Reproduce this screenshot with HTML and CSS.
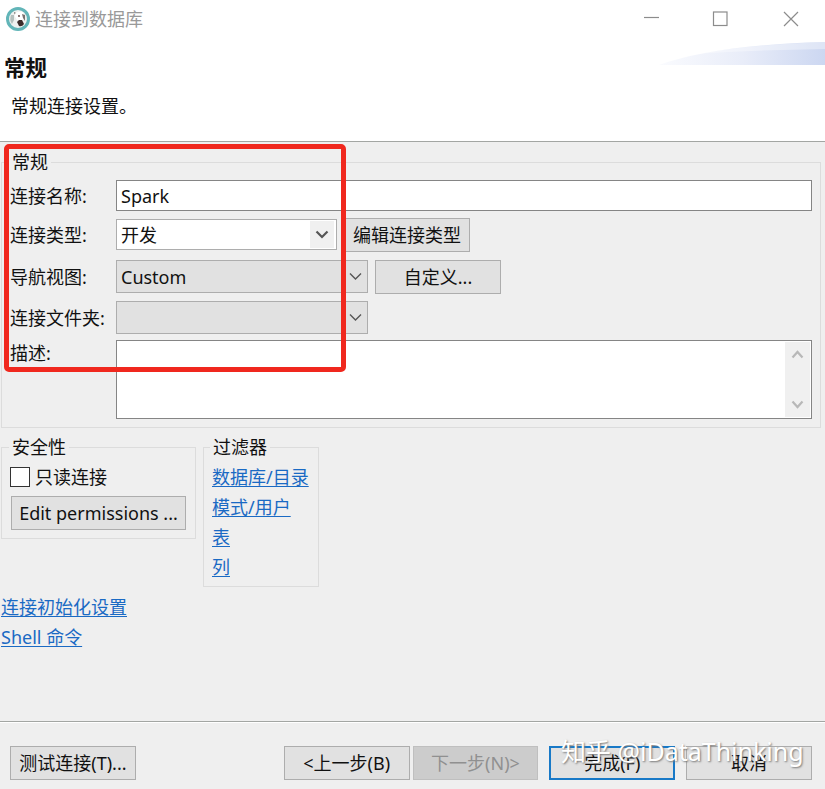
FILE: index.html
```
<!DOCTYPE html>
<html lang="zh-CN">
<head>
  <meta charset="UTF-8">
  <meta name="viewport" content="width=device-width, initial-scale=1.0">
  <link rel="stylesheet" href="styles.css">
  <title>连接到数据库</title>
</head>
<body>
  <header>
    <div class="titlebar">
      <svg class="logo" width="26" height="26" viewBox="0 0 26 26">
        <circle cx="13" cy="13" r="10.5" fill="#eef0ef" stroke="#62b5b8" stroke-width="3"/>
        <path d="M6 9 Q4 14 7 18 L9 14 L9 9 Z" fill="#b5bfbd"/>
        <path d="M9 6 L11 7 L10 10 Z" fill="#665f5c"/>
        <path d="M9 9 Q12 4 18 6 L20 11 L17 14 L12 14 Z" fill="#fff"/>
        <path d="M12 16 L14 14 L17 14 L19 18 Q17 21 14 20 Z" fill="#3b2b2a"/>
        <path d="M17 8 L20 9 L20 15 L18 12 Z" fill="#77716f"/>
        <circle cx="14" cy="10" r=".9" fill="#533"/>
      </svg>
      <span class="title">连接到数据库</span>
      <svg class="controls" width="160" height="20" viewBox="0 0 160 20" fill="none" stroke="#8c8c8c" stroke-width="1.2">
        <path d="M0 8.5H15"/>
        <rect x="69.5" y="3" width="13.5" height="13.5"/>
        <path d="M140 3L154 17M154 3L140 17"/>
      </svg>
    </div>
    <svg class="swoosh" width="170" height="28" viewBox="0 0 170 28">
      <defs>
        <linearGradient id="fade">
          <stop offset="0" stop-color="#fafbfe"/>
          <stop offset=".5" stop-color="#e9edf9"/>
          <stop offset="1" stop-color="#ccd7f1"/>
        </linearGradient>
      </defs>
      <path d="M4 24Q60 4 170 1V24Z" fill="url(#fade)"/>
      <path d="M40 13Q90 4 170 1V8Q100 9 40 13Z" fill="#fff" opacity=".35"/>
    </svg>
    <h1>常规</h1>
    <p>常规连接设置。</p>
  </header>

  <main>
    <fieldset class="general">
      <legend>常规</legend>
      <label>连接名称:</label>
      <div class="field name">Spark</div>

      <label class="low">连接类型:</label>
      <div class="row">
        <div class="field select type">开发
          <span class="drop"><svg width="14" height="9" viewBox="0 0 14 9"><path d="M1.5 1.5L7 7L12.5 1.5"/></svg></span>
        </div>
        <button class="edit-type">编辑连接类型</button>
      </div>

      <label class="low">导航视图:</label>
      <div class="row">
        <div class="field select flat">Custom
          <svg width="13" height="9" viewBox="0 0 13 9"><path d="M1 1.5L6.5 7L12 1.5"/></svg>
        </div>
        <button>自定义...</button>
      </div>

      <label class="low">连接文件夹:</label>
      <div class="row">
        <div class="field select flat"><span></span>
          <svg width="13" height="9" viewBox="0 0 13 9"><path d="M1 1.5L6.5 7L12 1.5"/></svg>
        </div>
      </div>

      <label>描述:</label>
      <div class="field area">
        <div class="scrollbar">
          <svg width="13" height="9" viewBox="0 0 13 9"><path d="M1.5 7.5L6.5 2L11.5 7.5"/></svg>
          <svg width="13" height="9" viewBox="0 0 13 9"><path d="M1.5 1.5L6.5 7L11.5 1.5"/></svg>
        </div>
      </div>
    </fieldset>

    <div class="groups">
      <fieldset class="security">
        <legend>安全性</legend>
        <label class="check"><span class="box"></span>只读连接</label>
        <button class="permissions">Edit permissions ...</button>
      </fieldset>
      <fieldset class="filters">
        <legend>过滤器</legend>
        <a href="#">数据库/目录</a>
        <a href="#">模式/用户</a>
        <a href="#">表</a>
        <a href="#">列</a>
      </fieldset>
    </div>

    <div class="links">
      <a href="#">连接初始化设置</a>
      <a href="#">Shell 命令</a>
    </div>
  </main>

  <footer>
    <button class="test">测试连接(T)...</button>
    <button class="prev">&lt;上一步(B)</button>
    <button class="next" disabled>下一步(N)&gt;</button>
    <button class="finish">完成(F)</button>
    <button>取消</button>
  </footer>

  <div class="highlight"></div>
  <div class="watermark">知乎 @iDataThinking</div>
</body>
</html>
```
FILE: styles.css
```
*, *::before, *::after {
  margin: 0;
  padding: 0;
  box-sizing: border-box;
}

body {
  position: relative;
  display: flex;
  flex-direction: column;
  width: 825px;
  height: 789px;
  overflow: hidden;
  background: #efefef;
  color: #111;
  font-family: "Noto Sans", "Noto Sans CJK SC", sans-serif;
  font-size: 18px;
  line-height: 24px;
}

header {
  position: relative;
  height: 142px;
  background: #fff;
  border-bottom: 1px solid #a3a6a3;
}

.titlebar {
  display: flex;
  align-items: center;
  height: 38px;
  padding: 0 21px 0 5px;
}

.title {
  margin-left: 4px;
  color: #999;
}

.controls {
  margin-left: auto;
}

.swoosh {
  position: absolute;
  top: 41px;
  right: 0;
}

h1 {
  margin: 17px 0 0 4px;
  font-size: 21.5px;
  line-height: 26px;
}

header p {
  margin: 13px 0 0 11px;
}

main {
  flex: 1;
  padding-top: 8px;
}

fieldset {
  border: 1px solid #dcdcdc;
}

legend {
  margin-left: -2px;
  padding: 0 3px;
}

.general {
  display: grid;
  grid-template-columns: 105px 695px;
  grid-template-rows: 38px 42px 41px 39px 80px;
  align-items: start;
  width: 820px;
  height: 278px;
  margin-left: 1px;
  padding: 6px 0 0 9px;
}

.general label {
  padding-top: 4px;
  margin-left: -1px;
  white-space: nowrap;
}

.general .low {
  padding-top: 5px;
}

.general label:last-of-type {
  padding-top: 1px;
}

.row {
  display: flex;
  gap: 7px;
}

.field {
  display: flex;
  align-items: center;
  background: #fff;
  border: 1px solid #858585;
  padding-left: 4px;
}

.name {
  width: 696px;
  height: 31px;
}

.select {
  justify-content: space-between;
}

.select path {
  fill: none;
  stroke: #555;
  stroke-width: 1.4;
}

.type {
  width: 221px;
  height: 31px;
  margin-top: 1px;
  border-color: #adadad;
}

.drop {
  display: flex;
  align-items: center;
  justify-content: center;
  width: 24px;
  height: 27px;
  margin-right: 2px;
  background: #f0f0f0;
}

.drop path {
  stroke-width: 2.2;
}

.flat {
  width: 252px;
  height: 33px;
  padding-right: 5px;
  background: #e1e1e1;
  border-color: #adadad;
}

.area {
  justify-content: flex-end;
  width: 696px;
  height: 79px;
}

.scrollbar {
  display: flex;
  flex-direction: column;
  justify-content: space-between;
  align-items: center;
  width: 25px;
  height: 75px;
  margin-right: 1px;
  padding: 8px 0;
  background: #f0f0f0;
}

.scrollbar path {
  fill: none;
  stroke: #b8b8b8;
  stroke-width: 2.2;
}

button {
  width: 126px;
  height: 34px;
  background: #e1e1e1;
  border: 1px solid #adadad;
  color: #111;
  font: inherit;
  white-space: nowrap;
}

.groups {
  display: flex;
  align-items: flex-start;
  gap: 7px;
  margin: 7px 0 0 1px;
}

.security {
  width: 195px;
  height: 104px;
  padding-left: 8px;
}

.security legend {
  margin-left: -1px;
}

.check {
  display: flex;
  align-items: center;
  gap: 5px;
  height: 36px;
}

.box {
  width: 20px;
  height: 20px;
  background: #fff;
  border: 1px solid #333;
}

.permissions {
  width: 175px;
  margin: 1px;
}

.filters {
  width: 116px;
  height: 152px;
  padding: 3px 0 0 8px;
}

.filters legend {
  margin-left: -2px;
}

a {
  display: block;
  width: fit-content;
  color: #1a6ac4;
  line-height: 30px;
  text-underline-offset: 2px;
  text-decoration-thickness: 1px;
  white-space: nowrap;
}

.links {
  margin: 5px 0 0 1px;
}

footer {
  display: flex;
  height: 68px;
  padding: 24px 13px 0 10px;
  border-top: 1px solid #a3a6a3;
  box-shadow: inset 0 1px #fff;
}

.prev {
  margin-left: 148px;
}

.next {
  margin: 0 11px 0 3px;
  background: #ccc;
  border-color: #bfbfbf;
  color: #909090;
}

.finish {
  margin-right: 11px;
  border: 2px solid #1879c7;
}

/* red frame over the fields to fill in */
.highlight {
  position: absolute;
  left: 4px;
  top: 144px;
  width: 342px;
  height: 228px;
  border: 5px solid #f0281e;
  border-radius: 5px;
}

.watermark {
  position: absolute;
  left: 561px;
  top: 735px;
  color: #fff;
  font-size: 25px;
  line-height: 32px;
  text-shadow: 1px 1px 2px #777;
  white-space: nowrap;
}
```
